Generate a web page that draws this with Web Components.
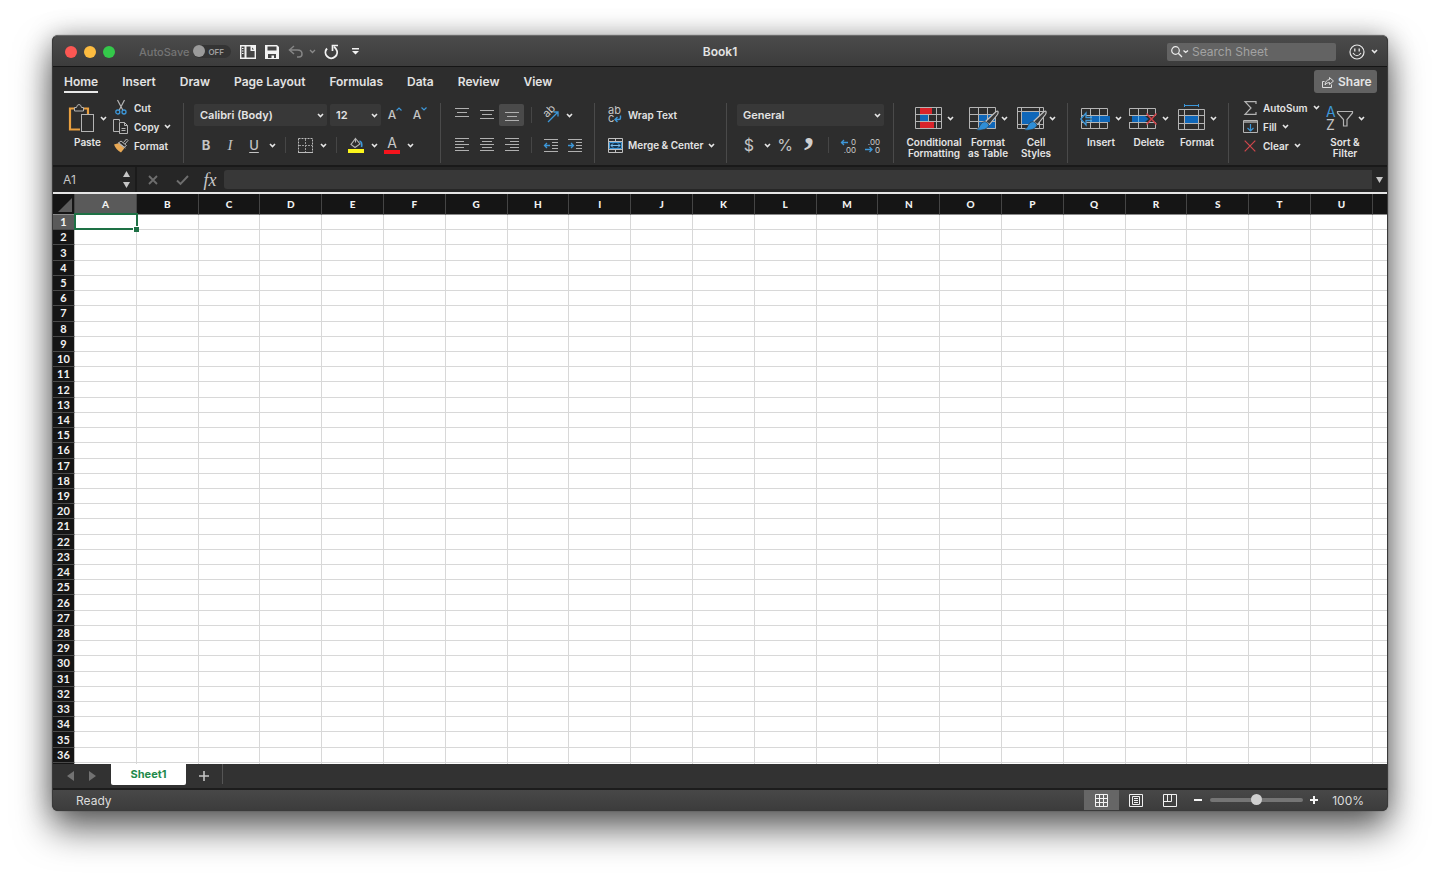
<!DOCTYPE html>
<html lang="en">
<head>
<meta charset="utf-8">
<title>Book1</title>
<style>
  html, body { margin: 0; height: 100%; background: #fff; }
  body { box-sizing: border-box; padding: 35px 52px 70px; font-family: Inter, "Liberation Sans", sans-serif; color: #e4e4e4; overflow: hidden; }
</style>
</head>
<body>
<app-window>
  <title-bar slot="title">Book1</title-bar>
  <ribbon-tabs slot="ribbon"></ribbon-tabs>
  <ribbon-body slot="ribbon"></ribbon-body>
  <formula-bar slot="formula"></formula-bar>
  <sheet-grid></sheet-grid>
  <sheet-tabs slot="footer"></sheet-tabs>
  <status-bar slot="footer"></status-bar>
</app-window>

<script>
const G = '#b4b4b4', B = '#3d97d8', F = '#0f67b9', R = '#d8232a';
const bars = (list, w = 14) => [w, 14, list.map(([x, y, l]) => `<rect x="${x}" y="${y}" width="${l}" height="1" fill="#b0b0b0"/>`).join('')];
const table = `<path d="M.5 .5h26v21h-26zM.5 7.500h26M.5 14.500h26M5.500 .5v21M13.500 .5v21M21.500 .5v21" fill="none" stroke="${G}"/>`;
const cells = `<path d="M.5 2.500h26v20h-26zM.5 9.500h26M.5 16.500h26M9.500 2.500v20M18.500 2.500v20" fill="none" stroke="${G}"/>`;
const brush = `<path d="M29 7.500Q29.500 9 28.500 10.500L20.500 20.500L16.500 17.500L26 8.500Q28 6.500 29 7.500Z" fill="#3a3a3a" stroke="#c2c2c2" stroke-width="1.200"/><path d="M16 17.500Q20 19 20 21.500Q17.500 27 7 26Q10.500 24 11 21.500Q12.500 17.500 16 17.500Z" fill="#2f8ed6" stroke="#2d2d2d" stroke-width=".6"/>`;

/* name: [width, height, shapes] */
const ICONS = {
  chev: [7, 5, '<path d="M1 1l2.500 2.500L6 1" fill="none" stroke="#e6e6e6" stroke-width="1.600"/>'],
  chevDim: [7, 5, '<path d="M1 1l2.500 2.500L6 1" fill="none" stroke="#8a8a8a" stroke-width="1.300"/>'],
  book: [16, 14, '<path d="M.7 .7h14.600v12.600H.7z" fill="none" stroke="#f2f2f2" stroke-width="1.400"/><path d="M4.500 1h2v12h-2z" fill="#f2f2f2"/><path d="M2 3.500h1.500M2 6h1.500M2 8.500h1.500" stroke="#f2f2f2"/><path d="M8 3.500h3V6h3v5.500H8z" fill="#444"/><path d="M10.500 1v5H15V1z" fill="#f2f2f2"/><path d="M12 2.500v2h2z" fill="#444"/>'],
  save: [14, 14, '<path d="M0 0h12l2 2v12H0z" fill="#f2f2f2"/><path d="M2.500 1.500h9v4h-9zM3 9h8v4H9v-2.500H6.500V13H3z" fill="#444"/>'],
  undo: [16, 13, '<path d="M6 1L1.500 5L6 9M2 5h7.500q4.500 0 4.500 4q0 3-3 3H9" fill="none" stroke="#858585" stroke-width="1.500"/>'],
  redo: [15, 15, '<path d="M3 4.500A5.800 5.800 0 1 0 12 5L10 2.500" fill="none" stroke="#f2f2f2" stroke-width="1.900"/><path d="M8.500 7V1.500H14" fill="none" stroke="#f2f2f2" stroke-width="1.700"/>'],
  more: [7, 7, '<path d="M0 0h7v1.500H0zM0 3h7L3.500 6.500z" fill="#f2f2f2"/>'],
  search: [18, 12, '<circle cx="4.500" cy="4.500" r="3.800" fill="none" stroke="#ececec" stroke-width="1.200"/><path d="M7.300 7.300L11 11" stroke="#ececec" stroke-width="1.300"/><path d="M12.500 4.500l2.200 2L17 4.500" fill="none" stroke="#ececec" stroke-width="1.300"/>'],
  smile: [16, 16, '<circle cx="8" cy="8" r="7" fill="none" stroke="#e8e8e8" stroke-width="1.200"/><path d="M5.800 4.500v3M10.200 4.500v3" stroke="#e8e8e8" stroke-width="1.300"/><path d="M4 9q4 5.500 8 0" fill="none" stroke="#e8e8e8" stroke-width="1.200"/>'],
  share: [12, 12, '<path d="M2.500 5.500h-2v6h9v-3" fill="none" stroke="#ddd"/><path d="M7.500 1.500l4 3.500l-4 3.500v-2q-3 0-4.500 2.500q.500-5 4.500-5.500z" fill="none" stroke="#ddd"/>'],
  paste: [27, 30, `<path d="M7 5.500H2v21h10M16 5.500h4V11" fill="none" stroke="#e9a040" stroke-width="2.200"/><path d="M6.500 8V4.500h2Q9 1.500 11 1.500T13.500 4.500h2V8z" fill="#2d2d2d" stroke="${G}"/><rect x="13.500" y="11.500" width="12" height="17" fill="#2d2d2d" stroke="${G}"/>`],
  cut: [12, 15, `<path d="M2.500 0L8 10.500M9.500 0L4 10.500" stroke="${G}" stroke-width="1.200"/><circle cx="2.800" cy="12" r="2" fill="none" stroke="${B}" stroke-width="1.300"/><circle cx="9" cy="12" r="2" fill="none" stroke="${B}" stroke-width="1.300"/>`],
  copy: [16, 15, `<path d="M6 12.500H.5V.5h6v2" fill="none" stroke="${G}"/><path d="M6.500 3.500h5l3 3v8h-8z" fill="#2d2d2d" stroke="${G}"/><path d="M11.500 3.500v3h3M8.500 9.500h4M8.500 11.500h4" fill="none" stroke="${G}"/>`],
  painter: [16, 15, `<path d="M1 6.500L6 5l5.500 5L8 14.500Q3 12 1 6.500z" fill="#e9a955"/><path d="M5.500 4.500l7 5.500M8 3l5.500 4.500L11 9.500L5.500 5zM10.500 4.500l3-3.500 1.500 1.500-3 3.500" fill="#2d2d2d" stroke="${G}"/>`],
  caretUp: [6, 4, `<path d="M.5 3.500L3 1l2.500 2.500" fill="none" stroke="${B}" stroke-width="1.200"/>`],
  caretDn: [6, 4, `<path d="M.5 .5L3 3L5.500 .5" fill="none" stroke="${B}" stroke-width="1.200"/>`],
  border: [15, 15, `<path d="M.5 .5h14v14H.5z" fill="none" stroke="#bbb" stroke-dasharray="2 1"/><path d="M7.500 1v13M1 7.500h13" stroke="#999" stroke-dasharray="2 1"/><path d="M0 14.500h15" stroke="#bbb"/>`],
  bucket: [16, 16, `<path d="M7.500 1.500L12 7l-5 3.500L3 7.500zM7.500 1.500v4" fill="none" stroke="${G}" stroke-width="1.100"/><path d="M11.500 4q3 1 2 6" fill="none" stroke="${B}" stroke-width="1.600"/><path d="M0 12h16v4H0z" fill="#fbf51c"/>`],
  fontColor: [16, 17, `<path d="M0 13h16v4H0z" fill="#f5141c"/><text x="8" y="11" text-anchor="middle" font-size="14" fill="#c8c8c8">A</text>`],
  comma: [10, 14, `<text x="5" y="6" text-anchor="middle" font-size="40" font-weight="700" font-family="Liberation Serif, serif" fill="#d0d0d0">,</text>`],
  top: bars([[0, 0, 14], [2, 4, 10], [0, 8, 14]]),
  mid: bars([[0, 2, 14], [2, 6, 10], [0, 10, 14]]),
  bot: bars([[0, 4, 14], [2, 8, 10], [0, 12, 14]]),
  left: bars([[0, 0, 14], [0, 3, 9], [0, 6, 14], [0, 9, 9], [0, 12, 14]]),
  center: bars([[0, 0, 14], [2, 3, 10], [0, 6, 14], [2, 9, 10], [0, 12, 14]]),
  right: bars([[0, 0, 14], [5, 3, 9], [0, 6, 14], [5, 9, 9], [0, 12, 14]]),
  orient: [16, 16, `<text x="0" y="0" font-size="11" fill="#c8c8c8" transform="translate(4 11) rotate(-45)">ab</text><path d="M5 15L14.500 5.500M10.500 5H15v4.500" fill="none" stroke="${B}" stroke-width="1.300"/>`],
  outdent: [14, 13, `<path d="M0 .5h14M8 3.500h6M8 6.500h6M8 9.500h6M0 12.500h14" stroke="#b0b0b0"/><path d="M.5 6.500H6M3 4L.5 6.500L3 9" fill="none" stroke="${B}" stroke-width="1.300"/>`],
  indent: [14, 13, `<path d="M0 .5h14M8 3.500h6M8 6.500h6M8 9.500h6M0 12.500h14" stroke="#b0b0b0"/><path d="M0 6.500h5.500M3 4l2.500 2.500L3 9" fill="none" stroke="${B}" stroke-width="1.300"/>`],
  wrap: [15, 16, `<text x="0" y="7" font-size="11" fill="#c4c4c4">ab</text><text x="0" y="15" font-size="11" fill="#c4c4c4">c</text><path d="M12.500 8.500v2.500q0 1.500-1.500 1.500H7M9.500 10L7 12.500L9.500 15" fill="none" stroke="${B}" stroke-width="1.400"/>`],
  merge: [15, 15, `<path d="M.5 .5h14v14H.5zM.5 3.500h14M.5 11.500h14M7.500 .5v3M7.500 11.500v3" fill="none" stroke="#c0c0c0"/><path d="M1.500 4.500h12v6h-12z" fill="#16364f" stroke="${B}"/><path d="M3 7.500h9M5 5.500l-2 2l2 2M10 5.500l2 2l-2 2" fill="none" stroke="#7cc0ee"/>`],
  decInc: [15, 15, `<path d="M0 4.500h7M3 2L.5 4.500L3 7" fill="none" stroke="${B}" stroke-width="1.300"/><text x="15" y="7" text-anchor="end" font-size="8" fill="#ccc">0</text><text x="15" y="15" text-anchor="end" font-size="8" fill="#ccc">.00</text>`],
  decDec: [15, 15, `<path d="M0 11.500h7M4.500 9L7 11.500L4.500 14" fill="none" stroke="${B}" stroke-width="1.300"/><text x="15" y="7" text-anchor="end" font-size="8" fill="#ccc">.00</text><text x="15" y="15" text-anchor="end" font-size="8" fill="#ccc">0</text>`],
  cond: [27, 28, `<g transform="translate(0 3)">${table}<path d="M5 1h12v6H5zM5 15h14v6H5z" fill="${R}"/><path d="M5 8h8v6H5z" fill="${F}"/></g>`],
  fmtTable: [27, 28, `<g transform="translate(0 3)"><path d="M9 8h18v14H9z" fill="${F}"/><path d="M.5 .5h26v21h-26zM.5 7.500h26M.5 14.500h26M9.500 .5v21M18.500 .5v21" fill="none" stroke="${G}"/></g>${brush}`],
  cellStyle: [27, 28, `<g transform="translate(0 3)"><path d="M.5 .5h26v21h-26zM.5 4.500h26M.5 17.500h26M4.500 .5v21M22.500 .5v21" fill="none" stroke="${G}"/><path d="M5 5h17v12H5z" fill="${F}"/></g>${brush}`],
  insert: [30, 25, `<g transform="translate(1 0)">${cells}<path d="M9 10h20v6H9z" fill="${F}"/></g><path d="M12 11.500H6V7L.8 13L6 19v-4.500h6" fill="#2d2d2d" stroke="${B}" stroke-width="1.300"/><path d="M11 10v6M19.500 10v6" stroke="#5fb0e8"/>`],
  del: [28, 25, `${cells}<path d="M0 10h28v6H0z" fill="#2d2d2d"/><path d="M3 10h13l3.500 3l-3.500 3H3z" fill="${F}"/><path d="M9.500 10v6" stroke="#5fb0e8"/><path d="M17.500 7.500l10 11M27.500 7.500l-10 11" stroke="#cf4248" stroke-width="1.500"/>`],
  format: [27, 28, `<g transform="translate(0 2)"><path d="M.5 3.500h26v20h-26zM.5 9.500h26M.5 17.500h26M6.500 3.500v20M20.500 3.500v20" fill="none" stroke="${G}"/><path d="M7 10h13v7H7z" fill="${F}"/></g><path d="M6 1.500h15M6.500 0v3M20.500 0v3" stroke="${B}"/>`],
  sum: [13, 14, `<path d="M12 3V.7H1L7 7L1 13.300h11V11" fill="none" stroke="${G}" stroke-width="1.200"/>`],
  fill: [15, 13, `<path d="M.5 .5h14v12H.5z" fill="none" stroke="${G}"/><path d="M1 1h13v2H1z" fill="#888"/><path d="M7.500 4v6.500M4.500 8l3 3l3-3" fill="none" stroke="${B}" stroke-width="1.200"/>`],
  clear: [12, 12, '<path d="M.7 .7l10.600 10.600M11.300 .7L.7 11.300" stroke="#d0474c" stroke-width="1.200"/>'],
  sort: [27, 27, `<text x="0" y="12" font-size="14" fill="${B}">A</text><text x="0" y="25" font-size="14" fill="#c4c4c4">Z</text><path d="M11.500 6.500h15v1.500L21 14.500v6.500h-3.500v-6.500L11.500 8z" fill="none" stroke="${G}" stroke-width="1.200"/>`],
  stepUp: [7, 6, '<path d="M0 6h7L3.500 0z" fill="#c6c6c6"/>'],
  stepDn: [7, 6, '<path d="M0 0h7L3.500 6z" fill="#c6c6c6"/>'],
  cancel: [10, 10, '<path d="M1 1l8 8M9 1L1 9" stroke="#6e6e6e" stroke-width="1.800"/>'],
  accept: [13, 10, '<path d="M1 5.500l3.500 3.500L12 1" fill="none" stroke="#6e6e6e" stroke-width="1.900"/>'],
  prev: [7, 10, '<path d="M7 0v10L0 5z" fill="#727272"/>'],
  next: [7, 10, '<path d="M0 0v10l7-5z" fill="#727272"/>'],
  plus: [10, 10, '<path d="M5 0v10M0 5h10" stroke="#c4c4c4" stroke-width="1.600"/>'],
  viewGrid: [13, 13, '<path d="M.5 .5h12v12H.5zM4.500 .5v12M8.500 .5v12M.5 4.500h12M.5 8.500h12" fill="none" stroke="#f4f4f4"/>'],
  viewPage: [14, 13, '<path d="M.5 .5h13v12H.5zM3.500 2.500h7v8h-7z" fill="none" stroke="#f0f0f0"/><path d="M5 4.500h4M5 6.500h4M5 8.500h4" stroke="#f0f0f0"/>'],
  viewBreak: [14, 13, '<path d="M.5 .5h13v12H.5zM4.500 .5v7M8.500 .5v7h-8" fill="none" stroke="#f0f0f0"/>'],
  zoomOut: [8, 8, '<path d="M0 4h8" stroke="#f4f4f4" stroke-width="2"/>'],
  zoomIn: [8, 8, '<path d="M4 0v8M0 4h8" stroke="#f4f4f4" stroke-width="2"/>'],
};

/* Registers an element whose shadow root is cloned from a template. */
function define(tag, css, html, setup) {
  const tpl = document.createElement('template');
  tpl.innerHTML = `<style>*{box-sizing:border-box}button,input,select{font:inherit;color:inherit;margin:0;padding:0;border:0;background:none}${css}</style>${html}`;
  customElements.define(tag, class extends HTMLElement {
    constructor() {
      super();
      this.attachShadow({ mode: 'open' }).append(tpl.content.cloneNode(true));
    }
    connectedCallback() { if (setup) setup(this, this.shadowRoot); }
  });
}

define('ui-icon', ':host{display:block;flex:none}svg{display:block;overflow:visible;font-weight:400}', '<span></span>', (el, root) => {
  const [w, h, body] = ICONS[el.getAttribute('name')];
  root.querySelector('span').innerHTML = `<svg width="${w}" height="${h}" viewBox="0 0 ${w} ${h}" aria-hidden="true">${body}</svg>`;
});

/* Small square command; its size comes from --w and --h. */
define('ui-tool', `
  :host{display:block;flex:none;width:var(--w,24px);height:var(--h,24px)}
  button{display:flex;align-items:center;justify-content:center;width:100%;height:100%;border-radius:2px}
  :host([pressed]) button{background:#4a4a4a}`,
  '<button type="button"><slot></slot></button>', (el, root) => {
    root.querySelector('button').setAttribute('aria-label', el.getAttribute('label'));
    const n = el.getAttribute('icon');
    if (n && !el.firstElementChild) el.insertAdjacentHTML('beforeend', `<ui-icon name="${n}"></ui-icon>`);
  });

/* Command with an icon in front of its text. */
define('ui-row-tool', `
  :host{display:block}
  button{display:flex;align-items:center;height:var(--row,19px);font-size:10px;font-weight:600;line-height:14px;white-space:nowrap;gap:5px}
  .i{display:flex;justify-content:center;width:16px}`,
  '<button type="button"><span class="i"></span><slot></slot></button>', (el, root) => {
    root.querySelector('.i').innerHTML = `<ui-icon name="${el.getAttribute('icon')}"></ui-icon>`;
    if (el.hasAttribute('menu')) root.querySelector('button').insertAdjacentHTML('beforeend', '<ui-icon name="chev"></ui-icon>');
  });

/* Tall command: picture and arrow above one or two lines of text. */
define('ui-big-tool', `
  :host{display:block;flex:none;width:var(--w,48px)}
  button{display:flex;flex-direction:column;align-items:center;width:100%;font-size:10px;font-weight:600;line-height:11px;white-space:nowrap;text-align:center}
  .i{display:flex;align-items:center;gap:5px;height:30px;margin-bottom:4px}`,
  '<button type="button"><span class="i"></span><span><slot></slot></span></button>', (el, root) => {
    root.querySelector('.i').innerHTML = `<ui-icon name="${el.getAttribute('icon')}"></ui-icon><ui-icon name="chev"></ui-icon>`;
  });

define('ui-select', `
  :host{display:grid;align-items:center;height:22px;width:var(--w);background:#383838;border-radius:2px}
  select,ui-icon{grid-area:1/1}
  select{appearance:none;width:100%;height:22px;padding-left:6px;font-size:11px;font-weight:600}
  ui-icon{justify-self:end;margin-right:3px;pointer-events:none}`,
  '<select><option></option></select><ui-icon name="chev"></ui-icon>', (el, root) => {
    root.querySelector('select').setAttribute('aria-label', el.getAttribute('label'));
    root.querySelector('option').textContent = el.getAttribute('value');
  });

define('ribbon-group', `
  :host{display:block;flex:none;width:var(--group);height:65px;padding-left:var(--pad,10px);position:relative}
  :host([divided])::after{content:"";position:absolute;right:0;top:5px;bottom:0;width:1px;background:#4a4a4a}
  .c{display:flex;align-items:flex-start}`,
  '<div class="c"><slot></slot></div>');

define('app-window', `
  :host{display:flex;flex-direction:column;height:100%;min-height:400px;border:1px solid #3a3a3a;border-top-color:#6a6a6a;border-radius:6px;background:#2d2d2d;overflow:hidden;box-sizing:border-box;
    box-shadow:0 0 1px rgba(0,0,0,.7),0 18px 36px rgba(0,0,0,.6),0 0 26px rgba(0,0,0,.25)}
  main{flex:1;min-height:0;display:flex}
  main ::slotted(*){flex:1}`,
  '<slot name="title"></slot><slot name="ribbon"></slot><slot name="formula"></slot><main><slot></slot></main><slot name="footer"></slot>');

define('title-bar', `
  :host{display:grid;grid-template-columns:1fr auto 1fr;align-items:center;height:31px;padding-top:1px;box-sizing:border-box;background:linear-gradient(#4b4b4b,#3c3c3c);border-bottom:1px solid #151515;flex:none}
  .l,.r,.lights{display:flex;align-items:center}
  .l{padding-left:12px}
  .r{justify-content:flex-end;padding-right:8px}
  .lights{gap:7px;margin-right:24px}
  .lights button{width:12px;height:12px;border-radius:6px}
  .auto{display:flex;align-items:center;gap:4px;margin-right:5px;font-size:11px;font-weight:500;color:#757575}
  .sw{display:grid;align-items:center}
  .sw>*{grid-area:1/1}
  input[type=checkbox]{appearance:none;width:38px;height:13px;border-radius:7px;background:#343434}
  input[type=checkbox]::before{content:"";display:block;width:12px;height:12px;border-radius:6px;background:#9b9b9b}
  .off{font-size:8px;font-weight:600;color:#a0a0a0;padding-left:15px}
  h1{margin:0;font-size:12px;font-weight:600;line-height:16px}
  .s{display:flex;align-items:center;gap:3px;width:169px;height:18px;padding-left:4px;background:#636363;border-radius:2px;margin-right:9px}
  .s input{flex:1;min-width:0;font-size:12px;outline:0}
  .s input::placeholder{color:#a2a2a2;opacity:1}`,
  `<div class="l">
    <div class="lights"><button aria-label="Close" style="background:#fc5753"></button><button aria-label="Minimize" style="background:#fdbc40"></button><button aria-label="Zoom" style="background:#34c84a"></button></div>
    <label class="auto"><span>AutoSave</span><span class="sw"><input type="checkbox" role="switch"><span class="off">OFF</span></span></label>
    <ui-tool icon="book" label="New from template"></ui-tool><ui-tool icon="save" label="Save"></ui-tool><ui-tool icon="undo" label="Undo"></ui-tool>
    <ui-tool icon="chevDim" label="Undo history" style="--w:9px"></ui-tool><ui-tool icon="redo" label="Repeat" style="--w:28px"></ui-tool><ui-tool icon="more" label="Customize toolbar" style="--w:20px"></ui-tool>
  </div>
  <h1><slot></slot></h1>
  <div class="r"><label class="s"><ui-icon name="search"></ui-icon><input type="text" placeholder="Search Sheet" aria-label="Search Sheet"></label>
    <ui-tool icon="smile" label="Feedback"></ui-tool><ui-tool icon="chev" label="Feedback menu" style="--w:10px"></ui-tool></div>`);

define('ribbon-tabs', `
  :host{display:flex;align-items:flex-start;justify-content:space-between;height:31px;padding:0 10px 0 11px;box-sizing:border-box;flex:none}
  nav{display:flex;gap:24px}
  a{display:block;height:26px;color:#e2e2e2;font-size:12px;font-weight:600;line-height:23px;text-decoration:none;white-space:nowrap;padding-top:3px}
  a[aria-current]{box-shadow:inset 0 -2px #e8e8e8}
  .share{display:flex;align-items:center;gap:4px;height:23px;width:63px;margin-top:3px;padding-left:8px;background:#626262;border-radius:3px;font-size:12px;font-weight:600}`,
  `<nav><a href="#home" aria-current="page">Home</a><a href="#insert">Insert</a><a href="#draw">Draw</a><a href="#layout">Page Layout</a><a href="#formulas">Formulas</a><a href="#data">Data</a><a href="#review">Review</a><a href="#view">View</a></nav>
  <button class="share" type="button"><ui-icon name="share"></ui-icon>Share</button>`);

const chev = label => `<ui-tool icon="chev" label="${label}" style="--w:12px"></ui-tool>`;
define('ribbon-body', `
  :host{display:flex;height:69px;box-sizing:border-box;border-bottom:2px solid #191919;flex:none}
  .rows{display:flex;flex-direction:column;gap:6px;padding-top:5px}
  .row{display:flex;align-items:center;height:24px}
  .sep{flex:none;width:1px;height:16px;margin:0 7px;background:#464646}
  .big{display:flex;padding-top:5px}
  .t{color:#c4c4c4;font-size:13px;line-height:16px;font-weight:500}
  .b{font-weight:700}
  .i{font-family:"Liberation Serif",serif;font-style:italic;font-size:15px}
  .u{text-decoration:underline;text-underline-offset:2px}
  .m{font-size:16px;font-weight:400;line-height:20px}
  .fs{display:flex;align-items:flex-start}
  .fs .t{font-size:12px}
  .sel{gap:3px}
  .sel ui-tool{--w:22px}`,
  `<ribbon-group divided style="--group:131px;--pad:9px">
    <div class="big" style="--w:51px"><ui-big-tool icon="paste">Paste</ui-big-tool></div>
    <div><ui-row-tool icon="cut">Cut</ui-row-tool><ui-row-tool icon="copy" menu>Copy</ui-row-tool><ui-row-tool icon="painter">Format</ui-row-tool></div>
  </ribbon-group>
  <ribbon-group divided style="--group:257px">
    <div class="rows">
      <div class="row sel"><ui-select label="Font" value="Calibri (Body)" style="--w:133px"></ui-select><ui-select label="Font size" value="12" style="--w:51px"></ui-select>
        <ui-tool label="Increase font size"><span class="fs"><span class="t">A</span><ui-icon name="caretUp"></ui-icon></span></ui-tool><ui-tool label="Decrease font size"><span class="fs"><span class="t">A</span><ui-icon name="caretDn"></ui-icon></span></ui-tool></div>
      <div class="row"><ui-tool label="Bold"><span class="t b">B</span></ui-tool><ui-tool label="Italic"><span class="t i">I</span></ui-tool><ui-tool label="Underline"><span class="t u">U</span></ui-tool>${chev('Underline styles')}<span class="sep"></span>
        <ui-tool icon="border" label="Borders"></ui-tool>${chev('Border styles')}<span class="sep"></span><ui-tool icon="bucket" label="Fill color"></ui-tool>${chev('Fill colors')}<ui-tool icon="fontColor" label="Font color"></ui-tool>${chev('Font colors')}</div>
    </div>
  </ribbon-group>
  <ribbon-group divided style="--group:154px;--pad:8px">
    <div class="rows">
      <div class="row"><ui-tool icon="top" label="Top align" style="--w:25px"></ui-tool><ui-tool icon="mid" label="Middle align" style="--w:25px"></ui-tool><ui-tool pressed icon="bot" label="Bottom align" style="--w:25px;--h:22px"></ui-tool><span class="sep"></span><ui-tool icon="orient" label="Orientation"></ui-tool>${chev('Orientation menu')}</div>
      <div class="row"><ui-tool icon="left" label="Align left" style="--w:25px"></ui-tool><ui-tool icon="center" label="Center" style="--w:25px"></ui-tool><ui-tool icon="right" label="Align right" style="--w:25px"></ui-tool><span class="sep"></span><ui-tool icon="outdent" label="Decrease indent"></ui-tool><ui-tool icon="indent" label="Increase indent"></ui-tool></div>
    </div>
  </ribbon-group>
  <ribbon-group divided style="--group:132px;--row:24px;--pad:12px">
    <div class="rows"><ui-row-tool icon="wrap">Wrap Text</ui-row-tool><ui-row-tool icon="merge" menu>Merge &amp; Center</ui-row-tool></div>
  </ribbon-group>
  <ribbon-group divided style="--group:167px">
    <div class="rows">
      <div class="row"><ui-select label="Number format" value="General" style="--w:147px"></ui-select></div>
      <div class="row"><ui-tool label="Accounting format"><span class="t m">$</span></ui-tool>${chev('Currencies')}<ui-tool label="Percent style"><span class="t m">%</span></ui-tool><ui-tool icon="comma" label="Comma style"></ui-tool><span class="sep"></span><ui-tool icon="decInc" label="Increase decimal"></ui-tool><ui-tool icon="decDec" label="Decrease decimal"></ui-tool></div>
    </div>
  </ribbon-group>
  <ribbon-group divided style="--group:174px">
    <div class="big"><ui-big-tool icon="cond" style="--w:60px">Conditional<br>Formatting</ui-big-tool><ui-big-tool icon="fmtTable">Format<br>as Table</ui-big-tool><ui-big-tool icon="cellStyle">Cell<br>Styles</ui-big-tool></div>
  </ribbon-group>
  <ribbon-group divided style="--group:161px;--pad:9px">
    <div class="big"><ui-big-tool icon="insert">Insert</ui-big-tool><ui-big-tool icon="del">Delete</ui-big-tool><ui-big-tool icon="format">Format</ui-big-tool></div>
  </ribbon-group>
  <ribbon-group style="--group:150px;--pad:13px">
    <div style="width:79px"><ui-row-tool icon="sum" menu>AutoSum</ui-row-tool><ui-row-tool icon="fill" menu>Fill</ui-row-tool><ui-row-tool icon="clear" menu>Clear</ui-row-tool></div>
    <div class="big"><ui-big-tool icon="sort">Sort &amp;<br>Filter</ui-big-tool></div>
  </ribbon-group>`);

define('formula-bar', `
  :host{display:flex;align-items:center;height:27px;box-sizing:border-box;background:#262626;border-bottom:2px solid #e6e6e6;flex:none}
  .name{width:64px;padding-left:10px;font-size:12px;color:#c6c6c6;outline:0}
  .step{display:flex;flex-direction:column;gap:5px;width:18px;align-items:center}
  .step button{display:block}
  .line{width:2px;align-self:stretch;background:#1b1b1b}
  .fx{width:26px;margin:0 1px 0 2px;font-family:"Liberation Serif",serif;font-style:italic;font-size:18px;line-height:18px;color:#c8c8c8;text-align:center}
  .f{flex:1;min-width:0;height:19px;background:#383838;border-radius:3px 0 0 3px;outline:0;padding:0 6px;font-size:12px}
  .end{width:15px;display:flex;justify-content:center}`,
  `<input class="name" value="A1" aria-label="Name box">
  <div class="step"><button aria-label="Previous name"><ui-icon name="stepUp"></ui-icon></button><button aria-label="Next name"><ui-icon name="stepDn"></ui-icon></button></div>
  <span class="line"></span>
  <ui-tool icon="cancel" label="Cancel" style="--w:32px"></ui-tool><ui-tool icon="accept" label="Enter" style="--w:26px"></ui-tool>
  <span class="fx">fx</span><input class="f" aria-label="Formula"><button class="end" aria-label="Expand formula bar"><ui-icon name="stepDn"></ui-icon></button>`);

define('sheet-grid', `
  :host{display:block;height:100%;background:#fff}
  table{width:100%;height:100%;table-layout:fixed;border-collapse:separate;border-spacing:0;font-family:Lato,"Liberation Sans",sans-serif;font-size:10px;font-weight:700;line-height:14px}
  th,td{padding:0;text-align:center;vertical-align:middle;overflow:hidden}
  .h{width:22px}.e{width:14px}
  thead tr{height:21px}
  thead th{background:#151515;border-right:1px solid #454545;border-bottom:1px solid #8a8a8a;color:#f2f2f2;font-weight:900}
  thead th:last-child{border-right:0}
  tbody th{background:#151515;color:#f2f2f2;font-size:11px;border-right:1px solid #c0c0c0;border-bottom:1px solid #4a4a4a}
  td{border-right:1px solid #d8d8d8;border-bottom:1px solid #d8d8d8}
  td:last-child{border-right:0}
  tbody tr:last-child{height:1px;line-height:1px;font-size:1px}
  tbody tr:last-child>*{border-bottom:0}
  .on,tbody .on{background:#5a5a5a}
  .corner{position:relative}
  .corner::after{content:"";position:absolute;right:2px;bottom:2px;border:7px solid;border-color:transparent #5c5c5c #5c5c5c transparent}
  .sel{position:relative;overflow:visible}
  .sel::before{content:"";position:absolute;inset:-2px -2px -1px -1px;border:2px solid #1e7145}
  .sel::after{content:"";position:absolute;right:-3px;bottom:-3px;width:6px;height:6px;background:#1e7145;border:solid #fff;border-width:1px 0 0 1px;box-sizing:border-box}`,
  '<table><thead></thead><tbody></tbody></table>', (el, root) => {
    const letters = [...'ABCDEFGHIJKLMNOPQRSTU'];
    root.querySelector('thead').innerHTML = `<tr><th class="h corner" aria-label="Select all"></th>${letters.map(c => `<th scope="col"${c === 'A' ? ' class="on"' : ''}>${c}</th>`).join('')}<th class="e"></th></tr>`;
    let rows = '';
    for (let r = 1; r <= 37; r++) {
      const cells = letters.map((c, i) => `<td${r === 1 && i === 0 ? ' class="sel"' : ''}></td>`).join('');
      rows += `<tr><th scope="row"${r === 1 ? ' class="on"' : ''}>${r < 37 ? r : ''}</th>${cells}<td></td></tr>`;
    }
    root.querySelector('tbody').innerHTML = rows;
  });

define('sheet-tabs', `
  :host{display:flex;align-items:flex-start;height:24px;background:#323232;flex:none}
  .nav{display:flex;gap:1px;padding-left:7px;width:58px}
  .tab{display:block;width:75px;height:21px;background:#fff;color:#1f8a4c;font-size:11px;font-weight:700;line-height:20px;text-align:center;text-decoration:none;border-radius:0 0 2px 2px}
  .line{width:1px;height:20px;background:#555}`,
  `<div class="nav"><ui-tool icon="prev" label="Previous sheet" style="--w:20px"></ui-tool><ui-tool icon="next" label="Next sheet" style="--w:22px"></ui-tool></div>
  <a class="tab" href="#sheet1">Sheet1</a><ui-tool icon="plus" label="Add sheet" style="--w:36px"></ui-tool><span class="line"></span>`);

define('status-bar', `
  :host{display:flex;align-items:center;justify-content:space-between;height:22px;box-sizing:border-box;border-top:2px solid #1c1c1c;background:linear-gradient(#484848,#3c3c3c);font-size:12px;color:#dcdcdc;padding:0 23px;flex:none}
  .r{display:flex;align-items:center}
  .v{display:flex;margin-right:1px}
  .on{background:#666}
  input{appearance:none;width:93px;height:12px;outline:0;margin:0 1px 0 2px}
  input::-webkit-slider-runnable-track{height:4px;border-radius:2px;background:#757575}
  input::-webkit-slider-thumb{appearance:none;width:11px;height:11px;margin-top:-4px;border-radius:6px;background:#cfcfcf}
  output{width:40px;text-align:right}`,
  `<span>Ready</span><div class="r"><div class="v"><ui-tool class="on" icon="viewGrid" label="Normal view" style="--w:35px;--h:20px"></ui-tool><ui-tool icon="viewPage" label="Page layout view" style="--w:34px;--h:20px"></ui-tool><ui-tool icon="viewBreak" label="Page break preview" style="--w:34px;--h:20px"></ui-tool></div>
  <ui-tool icon="zoomOut" label="Zoom out" style="--w:20px;--h:20px"></ui-tool><input type="range" min="0" max="100" value="50" aria-label="Zoom level"><ui-tool icon="zoomIn" label="Zoom in" style="--w:20px;--h:20px"></ui-tool><output>100%</output></div>`);
</script>
</body>
</html>
